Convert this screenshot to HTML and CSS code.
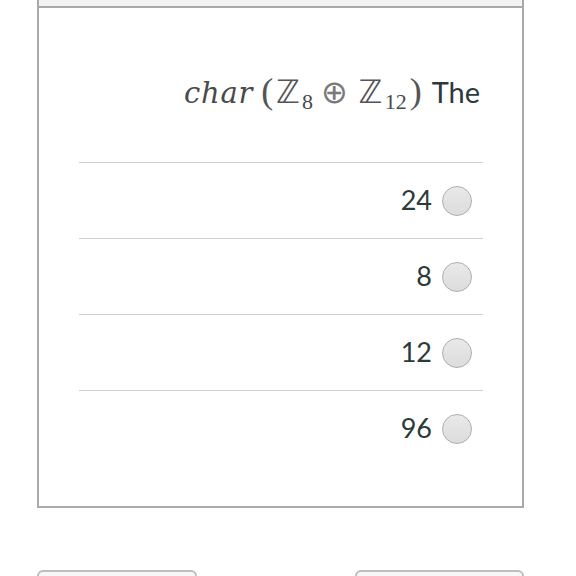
FILE: index.html
```html
<!DOCTYPE html>
<html>
<head>
<meta charset="utf-8">
<link rel="stylesheet" href="styles.css">
</head>
<body>
<div class="page">
  <div class="card">
    <div class="card-top"></div>
    <div class="content">
      <div class="question">
        <span class="math"><span class="mi">char</span><span class="paren">(</span><span class="bb">ℤ</span><sub>8</sub><span class="op">⊕</span><span class="bb">ℤ</span><sub>12</sub><span class="paren pr">)</span></span>
        <span class="qtext">The</span>
      </div>
      <div class="option"><span class="label">24</span><span class="radio"></span></div>
      <div class="option"><span class="label">8</span><span class="radio"></span></div>
      <div class="option"><span class="label">12</span><span class="radio"></span></div>
      <div class="option"><span class="label">96</span><span class="radio"></span></div>
    </div>
  </div>
  <div class="buttons">
    <div class="btn btn-left"></div>
    <div class="btn btn-right"></div>
  </div>
</div>
</body>
</html>
```

FILE: styles.css
```css
html, body {
  margin: 0;
  padding: 0;
  background: #ffffff;
}
body {
  font-family: Lato, "Open Sans", sans-serif;
}
.page {
  padding-left: 37px;
  width: 487px;
}
.card {
  box-sizing: border-box;
  width: 487px;
  border-left: 2px solid #a9a9a9;
  border-right: 2px solid #a9a9a9;
  border-bottom: 2px solid #a9a9a9;
}
.card-top {
  height: 6px;
  background: #f3f3f3;
  border-bottom: 2px solid #a9a9a9;
}
.content {
  padding: 0 39px 39px 40px;
}
.question {
  height: 155px;
  box-sizing: border-box;
  display: flex;
  justify-content: flex-end;
  align-items: baseline;
  padding-top: 62px;
  border-bottom: 1px solid #cfcfcf;
  padding-right: 3px;
}
.math {
  font-family: "DejaVu Serif", "Liberation Serif", serif;
  font-size: 30px;
  color: #4a4a4a;
  white-space: nowrap;
}
.mi {
  font-family: "DejaVu Serif", serif;
  font-style: italic;
  font-size: 29px;
  letter-spacing: 0.8px;
  margin-right: 8px;
}
.paren {
  font-family: "Liberation Serif", serif;
  font-size: 36px;
  color: #555;
}
.pr {
  margin-left: 3px;
}
.bb {
  font-family: "DejaVu Sans", sans-serif;
  font-size: 32px;
  color: #555;
  margin-left: 3px;
}
.op {
  font-family: "DejaVu Sans", sans-serif;
  font-size: 32px;
  color: #7a7a7a;
  margin: 0 8px 0 8px;
}
.math sub {
  font-family: "Liberation Serif", serif;
  font-size: 22px;
  vertical-align: -6px;
  line-height: 0;
  margin-left: 2px;
}
.qtext {
  margin-left: 10px;
  font-size: 29px;
  color: #2c3a3a;
}
.option {
  height: 76px;
  box-sizing: border-box;
  display: flex;
  justify-content: flex-end;
  align-items: center;
  padding-right: 11px;
  padding-bottom: 3px;
  border-bottom: 1px solid #cfcfcf;
}
.option:last-child {
  border-bottom: none;
}
.label {
  font-size: 27px;
  color: #2c3a3a;
  margin-right: 10px;
}
.radio {
  box-sizing: border-box;
  width: 30px;
  height: 30px;
  border-radius: 50%;
  border: 1px solid #adadad;
  background: linear-gradient(#e9e9e9, #dcdcdc);
  margin-top: 3px;
}
.buttons {
  display: flex;
  justify-content: space-between;
  margin-top: 62px;
}
.btn {
  box-sizing: border-box;
  height: 40px;
  border: 2px solid #bdbdbd;
  border-radius: 6px;
  background: #f7f7f7;
}
.btn-left {
  width: 160px;
}
.btn-right {
  width: 169px;
}
```
